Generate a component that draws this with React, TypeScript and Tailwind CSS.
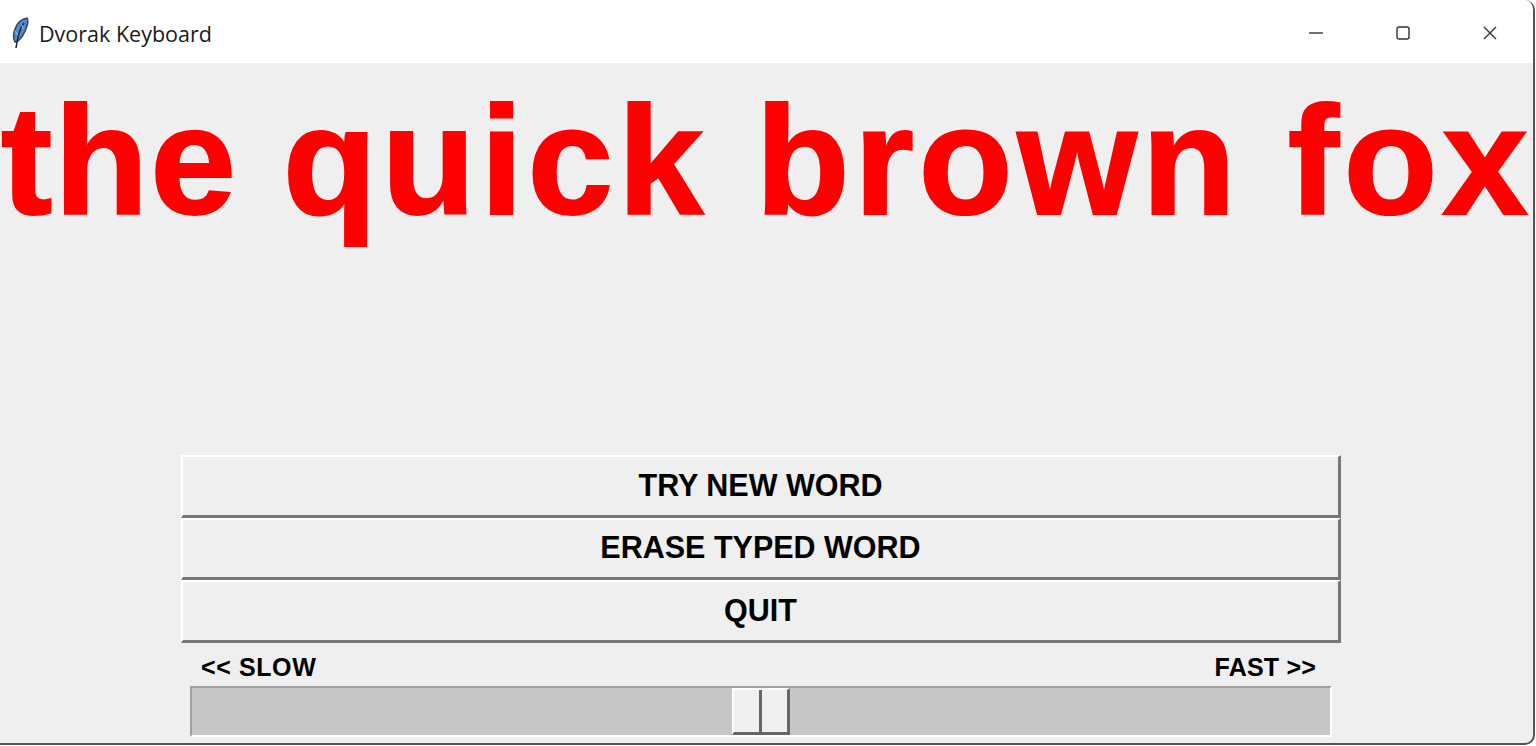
import React from 'react';

const Feather = () => (
  <svg width="20" height="32" viewBox="0 0 20 32" className="shrink-0">
    <path d="M17 1 C12 2 7 6 5 12 C3 17 3 21 5 25 L8 24 C12 21 15 15 17 9 C18 6 18 3 17 1 Z" fill="#4f8ad6" stroke="#3a4658" strokeWidth="1.5" />
    <path d="M14 6 C10 11 8 17 6 31" fill="none" stroke="#1f2937" strokeWidth="1.6" />
    <path d="M5 14 L8 18 M12 8 L13 12" fill="none" stroke="#a9c6ea" strokeWidth="1" />
  </svg>
);

const TkButton = ({ label }: { label: string }) => (
  <button className="w-full h-[62.5px] flex items-center justify-center bg-[#efefef] border-t-2 border-l-2 border-r-[3px] border-b-[3px] border-t-white border-l-white border-r-[#777777] border-b-[#777777] text-[30.5px] text-black font-bold">
    {label}
  </button>
);

const App = () => {
  return (
    <div className="w-[1536px] h-[746px] bg-white font-['Liberation_Sans',Arial,sans-serif]">
      <div className="w-[1535px] h-[745px] flex flex-col overflow-hidden bg-[#efefef] border-r-2 border-b-2 border-[#555555] rounded-tr-[10px] rounded-br-[10px]">
        <div className="h-[63px] shrink-0 bg-white flex items-center justify-between pl-[10px]">
          <div className="flex items-center gap-[9px] text-[#1a1a1a] pt-[3px]">
            <Feather />
            <span className="font-['Open_Sans',sans-serif] text-[21.5px] pt-[2px]">Dvorak Keyboard</span>
          </div>
          <div className="flex items-center h-full text-[#333333] pt-[2px]">
            <div className="w-[87px] flex justify-center">
              <svg width="14" height="14" viewBox="0 0 14 14"><path d="M0 7 H14" stroke="currentColor" strokeWidth="1.4" /></svg>
            </div>
            <div className="w-[87px] flex justify-center">
              <svg width="14" height="14" viewBox="0 0 14 14"><rect x="1" y="1" width="12" height="12" rx="2" fill="none" stroke="currentColor" strokeWidth="1.4" /></svg>
            </div>
            <div className="w-[87px] flex justify-center">
              <svg width="14" height="14" viewBox="0 0 14 14"><path d="M1 1 L13 13 M13 1 L1 13" stroke="currentColor" strokeWidth="1.4" /></svg>
            </div>
          </div>
        </div>

        <div className="h-[392px] shrink-0 overflow-hidden">
          <div className="text-[#ff0000] font-bold text-[154px] leading-[187px] tracking-[4.6px] whitespace-nowrap pl-[1px] pt-[5px] [-webkit-text-stroke:2px_#ff0000]">
            <span className="tracking-[2px]">the </span>quick brown fox
          </div>
        </div>

        <div className="ml-[181px] w-[1160px] flex flex-col">
          <TkButton label="TRY NEW WORD" />
          <TkButton label="ERASE TYPED WORD" />
          <TkButton label="QUIT" />
          <div className="h-[43px] flex items-center justify-between pl-[20px] pr-[25px] text-[25px] font-bold text-black pt-[7px]">
            <span className="tracking-[0.6px]">{'<< SLOW'}</span>
            <span className="tracking-[0.2px]">{'FAST >>'}</span>
          </div>
          <div className="mx-[9px] h-[51px] flex items-stretch bg-[#c6c6c6] border-2 border-t-[#a0a0a0] border-l-[#a0a0a0] border-r-white border-b-white">
            <div className="w-[540px]" />
            <div className="w-[58px] flex bg-[#efefef] border-t-2 border-l-2 border-r-[3px] border-b-[3px] border-t-white border-l-white border-r-[#666666] border-b-[#666666]">
              <div className="flex-1 border-r-[3px] border-r-[#666666]" />
              <div className="flex-1" />
            </div>
          </div>
        </div>
      </div>
    </div>
  );
};

export default App;
